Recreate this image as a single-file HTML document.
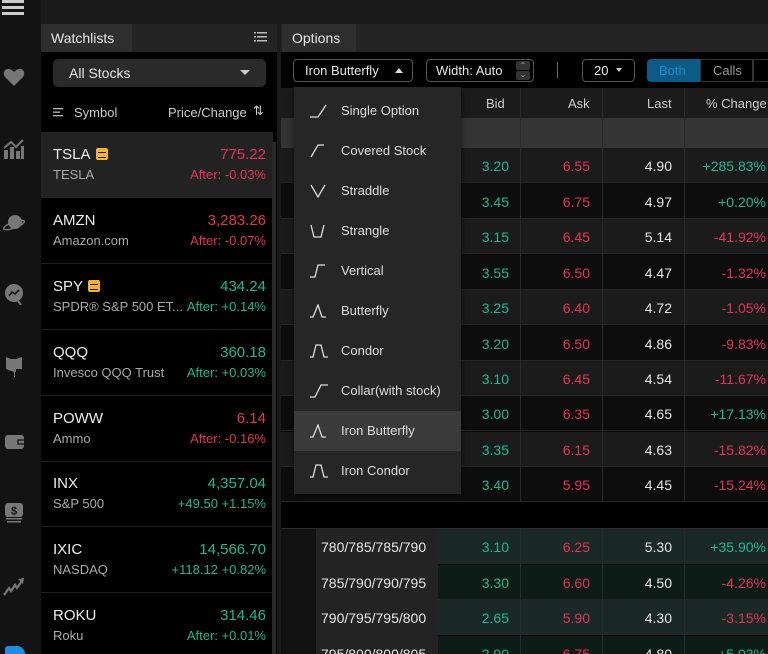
<!DOCTYPE html>
<html style="overflow:hidden;width:768px;height:654px"><head><meta charset="utf-8"><style>
*{margin:0;padding:0;box-sizing:border-box}
body{width:768px;height:654px;overflow:hidden;background:#0b0b0b;font-family:"Liberation Sans",sans-serif;color:#ddd;position:relative}
#wrap{position:absolute;left:0;top:0;width:768px;height:654px;overflow:hidden}
.a{position:absolute}
.g{color:#1db894}.r{color:#e3325c}.w{color:#e6e6e6}
.row{position:absolute;left:41px;width:232px;height:66px;border-bottom:1px solid #1e1e1e}
.row .s{position:absolute;left:12px;top:14px;font-size:15px;color:#eee}
.row .n{position:absolute;left:12px;top:35px;font-size:13px;color:#aaa;white-space:nowrap}
.row .p{position:absolute;right:7px;top:14px;font-size:15px}
.row .c{position:absolute;right:7px;top:35px;font-size:13px}
.note{display:inline-block;width:12px;height:12px;background:#f5b335;border-radius:2px;margin-left:5px;vertical-align:-1px;position:relative}
.note:after{content:"";position:absolute;left:2px;top:4px;width:8px;height:4px;border-top:1px solid #222;border-bottom:1px solid #222}
.tr{position:absolute;left:281px;width:487px;height:35px;border-bottom:1px solid #252525;font-size:14px}
.tr span{position:absolute;top:10px;text-align:right}
.b1{right:259px}.b2{right:178px}.b3{right:96px}.b4{right:2px}
.vl{position:absolute;top:88px;width:1px;height:566px;background:#2a2a2a}
.mi{position:absolute;left:294px;width:167px;height:40px;font-size:13px;color:#ddd}
.mi svg{position:absolute;left:16px;top:13px}
.mi span{position:absolute;left:47px;top:12px}
.ic{position:absolute;left:3px;width:22px;height:22px;fill:#777}
</style></head><body><div id="wrap">
<!-- sidebar -->
<div class="a" style="left:0;top:0;width:41px;height:654px;background:#131313"></div>
<div class="a" style="left:41px;top:0;width:727px;height:24px;background:#191919"></div>
<div class="a" style="left:2px;top:0;width:22px;height:3px;background:#ccc"></div>
<div class="a" style="left:2px;top:6px;width:22px;height:3px;background:#ccc"></div>
<div class="a" style="left:2px;top:12px;width:22px;height:3px;background:#ccc"></div>
<svg class="ic" style="top:66px" viewBox="0 0 22 22"><path d="M11 20 L2 11 C-1 7 2 2 6 3 C8 3 10 5 11 6 C12 5 14 3 16 3 C20 2 23 7 20 11Z"/></svg>
<svg class="ic" style="top:138px" viewBox="0 0 22 22"><rect x="1" y="12" width="4" height="9"/><rect x="7" y="9" width="4" height="12"/><rect x="13" y="13" width="4" height="8"/><rect x="18" y="8" width="3" height="13"/><path d="M1 10 L8 4 L13 9 L20 2" stroke="#777" stroke-width="2" fill="none"/></svg>
<svg class="ic" style="top:212px" viewBox="0 0 22 22"><circle cx="12" cy="10" r="7"/><ellipse cx="11" cy="13" rx="11" ry="3" fill="none" stroke="#777" stroke-width="1.5" transform="rotate(-20 11 13)"/></svg>
<svg class="ic" style="top:283px" viewBox="0 0 22 22"><circle cx="11" cy="10" r="9"/><path d="M15 18 L18 22" stroke="#777" stroke-width="2"/><path d="M6 13 L9 9 L12 11 L16 7" stroke="#131313" stroke-width="1.6" fill="none"/></svg>
<svg class="ic" style="top:355px" viewBox="0 0 22 22"><path d="M3 2 L8 4 L13 4 L19 2 L19 14 L13 14 L13 17 L12 17 L12 22 L11 22 L11 17 L3 14Z"/></svg>
<svg class="ic" style="top:431px" viewBox="0 0 22 22"><rect x="2" y="4" width="19" height="14" rx="3"/><path d="M21 9 L15 9 L15 13 L21 13" stroke="#131313" stroke-width="1.3" fill="none"/></svg>
<svg class="ic" style="top:502px" viewBox="0 0 22 22"><rect x="2" y="1" width="18" height="14" rx="3"/><rect x="3" y="16" width="16" height="1.5"/><rect x="4" y="19" width="14" height="1.5"/><text x="11" y="12.5" font-size="11" text-anchor="middle" fill="#131313" font-family="Liberation Sans" font-weight="bold">$</text></svg>
<svg class="ic" style="top:575px" viewBox="0 0 22 22"><path d="M1 20 L6 13 L8 16 L12 10 L14 13 L19 6" stroke="#777" stroke-width="2.2" fill="none"/><path d="M15 4 L21 3 L20 9Z"/></svg>
<div class="a" style="left:5px;top:646px;width:20px;height:8px;background:#1e8be6;border-radius:3px 8px 0 0"></div>

<!-- watchlist panel -->
<div class="a" style="left:41px;top:24px;width:236px;height:28px;background:#242424"></div>
<div class="a" style="left:41px;top:24px;width:91px;height:28px;background:#2e2e2e;font-size:14px;color:#e6e6e6;padding:6px 0 0 10px">Watchlists</div>
<svg class="a" style="left:254px;top:31px" width="13" height="11"><g fill="#bbb"><rect x="0" y="1" width="2" height="1.5"/><rect x="3" y="1" width="10" height="1.5"/><rect x="0" y="5" width="2" height="1.5"/><rect x="3" y="5" width="10" height="1.5"/><rect x="0" y="9" width="2" height="1.5"/><rect x="3" y="9" width="10" height="1.5"/></g></svg>
<div class="a" style="left:41px;top:52px;width:236px;height:602px;background:#000"></div>
<div class="a" style="left:53px;top:59px;width:213px;height:28px;background:#2a2a2a;border-radius:5px;font-size:14px;color:#e6e6e6;padding:6px 0 0 16px">All Stocks</div>
<div class="a" style="left:240px;top:70px;width:0;height:0;border-left:5px solid transparent;border-right:5px solid transparent;border-top:5px solid #ccc"></div>
<svg class="a" style="left:53px;top:107px" width="11" height="10"><g fill="#bbb"><rect y="1" width="10" height="1.3"/><rect y="4.5" width="7" height="1.3"/><rect y="8" width="10" height="1.3"/></g></svg>
<div class="a" style="left:74px;top:105px;font-size:13px;color:#ccc">Symbol</div>
<div class="a" style="left:168px;top:105px;font-size:13px;color:#ccc">Price/Change</div>
<div class="a" style="left:253px;top:103px;font-size:13px;color:#ccc">⇅</div>

<div class="row" style="top:132px;background:#222;border:none"><div class="s">TSLA<span class="note"></span></div><div class="n">TESLA</div><div class="p r">775.22</div><div class="c r">After: -0.03%</div></div>
<div class="row" style="top:198px"><div class="s">AMZN</div><div class="n">Amazon.com</div><div class="p r">3,283.26</div><div class="c r">After: -0.07%</div></div>
<div class="row" style="top:264px"><div class="s">SPY<span class="note"></span></div><div class="n">SPDR® S&amp;P 500 ET...</div><div class="p g">434.24</div><div class="c g">After: +0.14%</div></div>
<div class="row" style="top:330px"><div class="s">QQQ</div><div class="n">Invesco QQQ Trust</div><div class="p g">360.18</div><div class="c g">After: +0.03%</div></div>
<div class="row" style="top:396px"><div class="s">POWW</div><div class="n">Ammo</div><div class="p r">6.14</div><div class="c r">After: -0.16%</div></div>
<div class="row" style="top:461px"><div class="s">INX</div><div class="n">S&amp;P 500</div><div class="p g">4,357.04</div><div class="c g">+49.50 +1.15%</div></div>
<div class="row" style="top:527px"><div class="s">IXIC</div><div class="n">NASDAQ</div><div class="p g">14,566.70</div><div class="c g">+118.12 +0.82%</div></div>
<div class="row" style="top:593px;height:61px;border:none"><div class="s">ROKU</div><div class="n">Roku</div><div class="p g">314.46</div><div class="c g">After: +0.01%</div></div>
<div class="a" style="left:272px;top:142px;width:4px;height:512px;background:#2a2a2a"></div>
<div class="a" style="left:277px;top:24px;width:4px;height:630px;background:#1a1a1a"></div>

<!-- options panel -->
<div class="a" style="left:281px;top:24px;width:487px;height:28px;background:#242424"></div>
<div class="a" style="left:282px;top:24px;width:74px;height:28px;background:#2e2e2e;font-size:14px;color:#e6e6e6;padding:6px 0 0 10px">Options</div>
<div class="a" style="left:281px;top:52px;width:487px;height:36px;background:#000"></div>
<div class="a" style="left:293px;top:59px;width:120px;height:23px;border:1px solid #555;border-radius:4px;font-size:13px;color:#e6e6e6;padding:3px 0 0 11px">Iron Butterfly</div>
<div class="a" style="left:395px;top:68px;border-left:4px solid transparent;border-right:4px solid transparent;border-bottom:5px solid #ddd"></div>
<div class="a" style="left:426px;top:59px;width:108px;height:23px;border:1px solid #555;border-radius:4px;font-size:13px;color:#e6e6e6;padding:3px 0 0 9px">Width: Auto</div>
<div class="a" style="left:516px;top:61px;width:14px;height:9px;background:#333;border-radius:2px;font-size:8px;color:#aaa;text-align:center;line-height:9px">⌃</div>
<div class="a" style="left:516px;top:71px;width:14px;height:9px;background:#333;border-radius:2px;font-size:8px;color:#aaa;text-align:center;line-height:7px">⌄</div>
<div class="a" style="left:557px;top:62px;width:1px;height:16px;background:#666"></div>
<div class="a" style="left:582px;top:59px;width:53px;height:23px;border:1px solid #555;border-radius:4px;font-size:13px;color:#e6e6e6;padding:3px 0 0 11px">20</div>
<div class="a" style="left:616px;top:68px;border-left:3.5px solid transparent;border-right:3.5px solid transparent;border-top:4px solid #ccc"></div>
<div class="a" style="left:647px;top:59px;width:53px;height:23px;background:#0d5a86;border-radius:4px 0 0 4px;font-size:13px;color:#2486c4;padding:4px 0 0 12px">Both</div>
<div class="a" style="left:700px;top:59px;width:53px;height:23px;border:1px solid #333;font-size:13px;color:#999;padding:3px 0 0 12px">Calls</div>
<div class="a" style="left:753px;top:59px;width:20px;height:23px;border:1px solid #333"></div>

<div class="a" style="left:281px;top:88px;width:487px;height:30px;background:#1b1b1b"></div>
<div class="a" style="left:486px;top:96px;font-size:13px;color:#ccc">Bid</div>
<div class="a" style="left:568px;top:96px;font-size:13px;color:#ccc">Ask</div>
<div class="a" style="left:647px;top:96px;font-size:13px;color:#ccc">Last</div>
<div class="a" style="left:706px;top:96px;font-size:13px;color:#ccc">% Change</div>
<div class="a" style="left:281px;top:118px;width:487px;height:30px;background:#343434"></div>

<div class="tr" style="top:148px;background:#1b1b1b"><span class="b1 g">3.20</span><span class="b2 r">6.55</span><span class="b3 w">4.90</span><span class="b4 g">+285.83%</span></div>
<div class="tr" style="top:184px;background:#0d0d0d"><span class="b1 g">3.45</span><span class="b2 r">6.75</span><span class="b3 w">4.97</span><span class="b4 g">+0.20%</span></div>
<div class="tr" style="top:219px;background:#1b1b1b"><span class="b1 g">3.15</span><span class="b2 r">6.45</span><span class="b3 w">5.14</span><span class="b4 r">-41.92%</span></div>
<div class="tr" style="top:255px;background:#0d0d0d"><span class="b1 g">3.55</span><span class="b2 r">6.50</span><span class="b3 w">4.47</span><span class="b4 r">-1.32%</span></div>
<div class="tr" style="top:290px;background:#1b1b1b"><span class="b1 g">3.25</span><span class="b2 r">6.40</span><span class="b3 w">4.72</span><span class="b4 r">-1.05%</span></div>
<div class="tr" style="top:326px;background:#0d0d0d"><span class="b1 g">3.20</span><span class="b2 r">6.50</span><span class="b3 w">4.86</span><span class="b4 r">-9.83%</span></div>
<div class="tr" style="top:361px;background:#1b1b1b"><span class="b1 g">3.10</span><span class="b2 r">6.45</span><span class="b3 w">4.54</span><span class="b4 r">-11.67%</span></div>
<div class="tr" style="top:396px;background:#0d0d0d"><span class="b1 g">3.00</span><span class="b2 r">6.35</span><span class="b3 w">4.65</span><span class="b4 g">+17.13%</span></div>
<div class="tr" style="top:432px;background:#1b1b1b"><span class="b1 g">3.35</span><span class="b2 r">6.15</span><span class="b3 w">4.63</span><span class="b4 r">-15.82%</span></div>
<div class="tr" style="top:467px;background:#0d0d0d"><span class="b1 g">3.40</span><span class="b2 r">5.95</span><span class="b3 w">4.45</span><span class="b4 r">-15.24%</span></div>

<div class="tr" style="top:529px;background:#1a2925"><span class="b1 g">3.10</span><span class="b2 r">6.25</span><span class="b3 w">5.30</span><span class="b4 g">+35.90%</span></div>
<div class="tr" style="top:565px;background:#0e1c18"><span class="b1 g">3.30</span><span class="b2 r">6.60</span><span class="b3 w">4.50</span><span class="b4 r">-4.26%</span></div>
<div class="tr" style="top:600px;background:#1a2925"><span class="b1 g">2.65</span><span class="b2 r">5.90</span><span class="b3 w">4.30</span><span class="b4 r">-3.15%</span></div>
<div class="tr" style="top:636px;height:18px;border:none;background:#0e1c18"><span class="b1 g">2.90</span><span class="b2 r">6.75</span><span class="b3 w">4.80</span><span class="b4 g">+5.03%</span></div>
<div class="a" style="left:281px;top:529px;width:35px;height:125px;background:#111"></div>
<div class="a" style="left:316px;top:529px;width:122px;height:125px;background:#232323"></div>
<div class="a w" style="left:321px;top:539px;font-size:14px">780/785/785/790</div>
<div class="a w" style="left:321px;top:575px;font-size:14px">785/790/790/795</div>
<div class="a w" style="left:321px;top:610px;font-size:14px">790/795/795/800</div>
<div class="a w" style="left:321px;top:646px;font-size:14px;height:8px;overflow:hidden;line-height:16px">795/800/800/805</div>
<div class="vl" style="left:520px;height:414px"></div><div class="vl" style="left:602px;height:414px"></div><div class="vl" style="left:684px;height:414px"></div>
<div class="vl" style="left:520px;top:529px;height:125px"></div><div class="vl" style="left:602px;top:529px;height:125px"></div><div class="vl" style="left:684px;top:529px;height:125px"></div>
<div class="a" style="left:281px;top:502px;width:487px;height:27px;background:#000;border-bottom:1px solid #2a2a2a"></div>

<!-- dropdown -->
<div class="a" style="left:294px;top:87px;width:167px;height:407px;background:#262626;box-shadow:0 2px 6px rgba(0,0,0,.6)"></div>
<div class="a" style="left:294px;top:411px;width:167px;height:40px;background:#3a3a3a"></div>
<div class="mi" style="top:91px"><svg width="18" height="14"><path d="M0 13H8L16 1" stroke="#ddd" stroke-width="1.3" fill="none"/></svg><span>Single Option</span></div>
<div class="mi" style="top:131px"><svg width="18" height="14"><path d="M1 13L8 1H14" stroke="#ddd" stroke-width="1.3" fill="none"/></svg><span>Covered Stock</span></div>
<div class="mi" style="top:171px"><svg width="18" height="14"><path d="M1 1L8 13L15 1" stroke="#ddd" stroke-width="1.3" fill="none"/></svg><span>Straddle</span></div>
<div class="mi" style="top:211px"><svg width="18" height="14"><path d="M1 1L4 13H11L14 1" stroke="#ddd" stroke-width="1.3" fill="none"/></svg><span>Strangle</span></div>
<div class="mi" style="top:251px"><svg width="18" height="14"><path d="M0 13H5L8 1H15" stroke="#ddd" stroke-width="1.3" fill="none"/></svg><span>Vertical</span></div>
<div class="mi" style="top:291px"><svg width="18" height="14"><path d="M0 13H3L8 1L12 13H16" stroke="#ddd" stroke-width="1.3" fill="none"/></svg><span>Butterfly</span></div>
<div class="mi" style="top:331px"><svg width="18" height="14"><path d="M0 13H3L6 1H11L14 13H18" stroke="#ddd" stroke-width="1.3" fill="none"/></svg><span>Condor</span></div>
<div class="mi" style="top:371px"><svg width="18" height="14"><path d="M0 13H5L11 1H18" stroke="#ddd" stroke-width="1.3" fill="none"/></svg><span>Collar(with stock)</span></div>
<div class="mi" style="top:411px"><svg width="18" height="14"><path d="M0 13H3L8 1L12 13H16" stroke="#ddd" stroke-width="1.3" fill="none"/></svg><span>Iron Butterfly</span></div>
<div class="mi" style="top:451px"><svg width="18" height="14"><path d="M0 13H3L6 1H11L14 13H18" stroke="#ddd" stroke-width="1.3" fill="none"/></svg><span>Iron Condor</span></div>
</div></body></html>
